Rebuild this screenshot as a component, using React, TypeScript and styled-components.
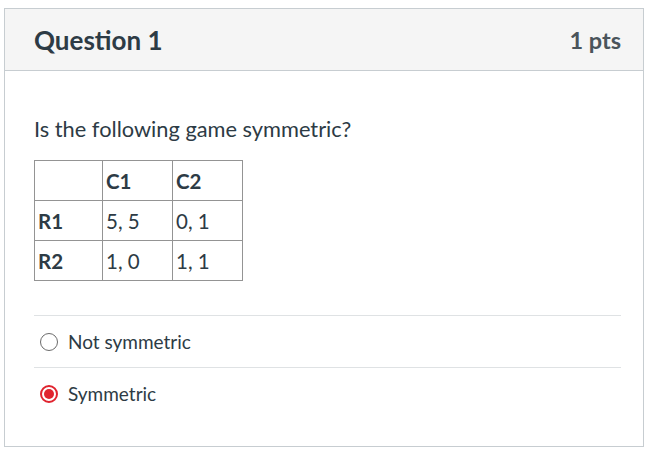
import styled, { createGlobalStyle } from 'styled-components'

const Globals = createGlobalStyle`
* {
	box-sizing: border-box;
}

body {
	margin: 0;
	padding: 0;
	background: #ffffff;
	font-family: 'Lato', 'Liberation Sans', sans-serif;
	color: #2d3b45;
}
`

const Page = styled.div`
	padding: 8px 10px 6px 4px;
`

const Card = styled.section`
	width: 640px;
	border: 1px solid #c7cdd1;
	background: #ffffff;
`

const Header = styled.header`
	display: flex;
	align-items: center;
	justify-content: space-between;
	height: 62px;
	padding: 0 22px 0 29px;
	background: #f5f5f5;
	border-bottom: 1px solid #c7cdd1;
`

const Title = styled.h2`
	margin: 0;
	font-size: 26px;
	font-weight: 700;
`

const Points = styled.span`
	font-size: 23.5px;
	font-weight: 700;
	color: #4a545b;
`

const Body = styled.div`
	padding: 42px 22px 27px 29px;
`

const Prompt = styled.p`
	margin: 0 0 16px;
	font-size: 21.8px;
	line-height: 31px;
`

const Grid = styled.table`
	border-collapse: collapse;
	margin-bottom: 34px;
`

const Cell = styled.td<{ $bold?: boolean; $wide?: boolean }>`
	width: ${(p) => (p.$wide ? '68px' : '70px')};
	height: 40px;
	padding: 0 3px;
	border: 1px solid #949494;
	font-size: 20.5px;
	font-weight: ${(p) => (p.$bold ? 700 : 400)};
	text-align: left;
	vertical-align: middle;
`

const Answers = styled.ul`
	list-style: none;
	margin: 0;
	padding: 0;
`

const Answer = styled.li`
	display: flex;
	align-items: center;
	gap: 10px;
	height: 52px;
	padding-left: 6px;
	border-top: 1px solid #dfe2e4;
	font-size: 19px;
`

const Radio = styled.span<{ $checked?: boolean }>`
	position: relative;
	width: 18px;
	height: 18px;
	border-radius: 50%;
	border: ${(p) => (p.$checked ? '2px solid #e0242f' : '1.5px solid #6b6b6b')};
	background: #ffffff;

	&::after {
		content: '';
		position: absolute;
		inset: 2px;
		border-radius: 50%;
		background: ${(p) => (p.$checked ? '#e0242f' : 'transparent')};
	}
`

const rows = [
	{ label: 'R1', cells: ['5, 5', '0, 1'] },
	{ label: 'R2', cells: ['1, 0', '1, 1'] },
]

const options = [
	{ text: 'Not symmetric', checked: false },
	{ text: 'Symmetric', checked: true },
]

export default function App() {
	return (
		<Page>
			<Globals />
			<Card>
				<Header>
					<Title>Question 1</Title>
					<Points>1 pts</Points>
				</Header>
				<Body>
					<Prompt>Is the following game symmetric?</Prompt>
					<Grid>
						<tbody>
							<tr>
								<Cell $wide />
								<Cell $bold>C1</Cell>
								<Cell $bold>C2</Cell>
							</tr>
							{rows.map((row) => (
								<tr key={row.label}>
									<Cell $bold $wide>
										{row.label}
									</Cell>
									{row.cells.map((c, i) => (
										<Cell key={i}>{c}</Cell>
									))}
								</tr>
							))}
						</tbody>
					</Grid>
					<Answers>
						{options.map((o) => (
							<Answer key={o.text}>
								<Radio $checked={o.checked} />
								{o.text}
							</Answer>
						))}
					</Answers>
				</Body>
			</Card>
		</Page>
	)
}
